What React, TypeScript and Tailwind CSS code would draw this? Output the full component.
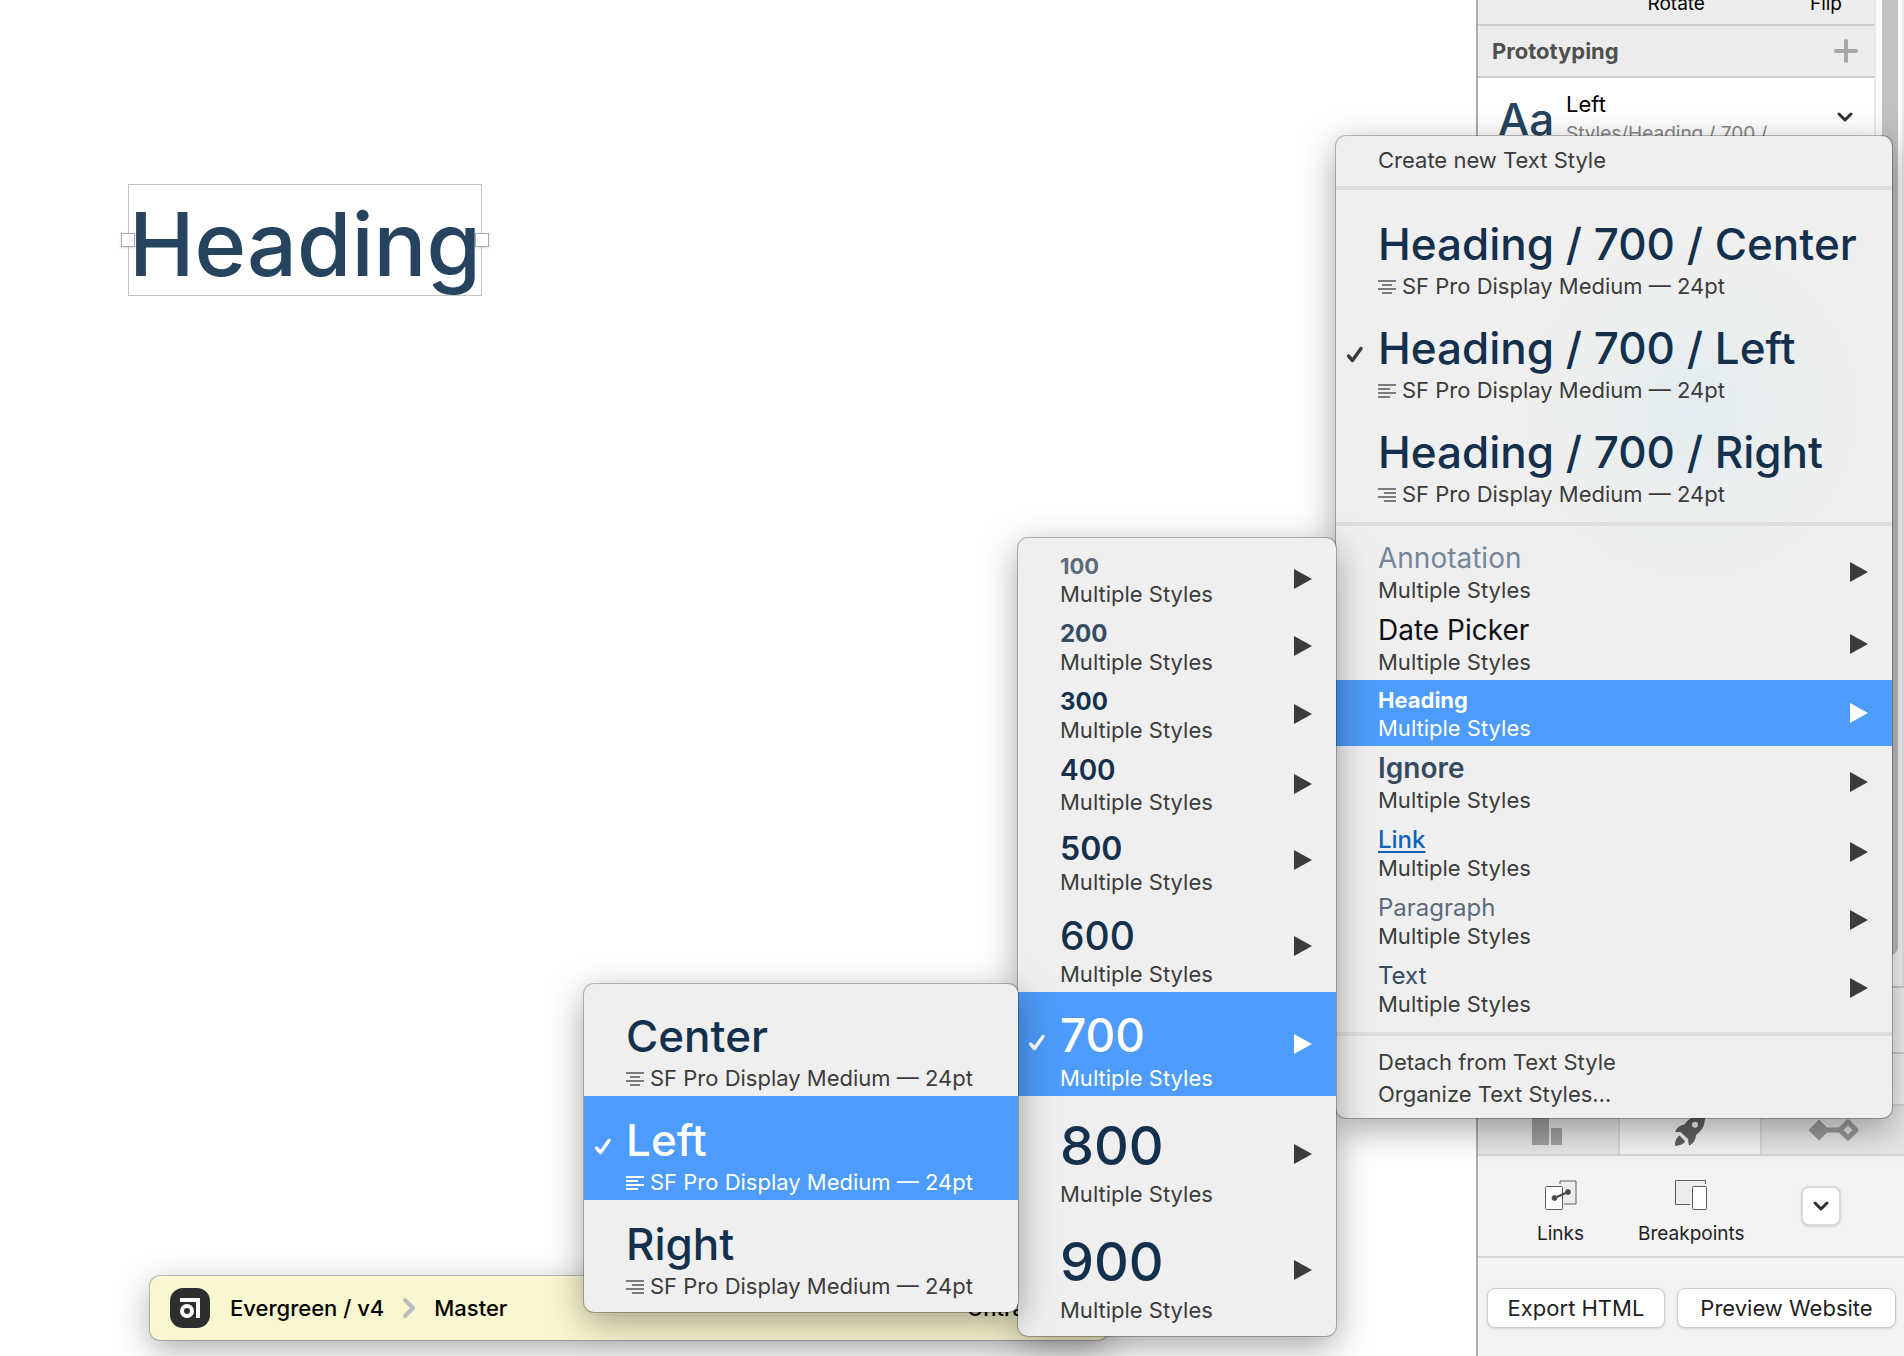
import type { ReactNode } from 'react';

type Align = 'left' | 'center' | 'right';

interface StyleRow {
  label: string;
  title: string;
  align?: Align;
  checked?: boolean;
  active?: boolean;
  submenu?: ReactNode;
}

const TITLE_22 = 'pt-1.5 text-[22px] leading-[28px] font-bold';
const TITLE_24 = 'pt-2 text-[24px] leading-[28px]';
const TITLE_28 = 'pt-1 text-[28px] leading-[36px]';
const TITLE_44 = 'pt-4 text-[44px] leading-[56px] font-medium';

const HEADING_STYLES: StyleRow[] = [
  { label: 'Heading / 700 / Center', title: `${TITLE_44} text-[#14304d]`, align: 'center' },
  { label: 'Heading / 700 / Left', title: `${TITLE_44} text-[#14304d]`, align: 'left', checked: true },
  { label: 'Heading / 700 / Right', title: `${TITLE_44} text-[#14304d]`, align: 'right' }
];

const ALIGNMENTS: StyleRow[] = [
  { label: 'Center', title: `${TITLE_44} text-[#14304d]`, align: 'center' },
  { label: 'Left', title: `${TITLE_44} text-white`, align: 'left', checked: true, active: true },
  { label: 'Right', title: `${TITLE_44} text-[#14304d]`, align: 'right' }
];

const WEIGHTS: StyleRow[] = [
  { label: '100', title: `${TITLE_22} text-[#5a6b7d]` },
  { label: '200', title: `${TITLE_24} font-bold text-[#354b61]` },
  { label: '300', title: `${TITLE_24} font-bold text-[#14304d]` },
  { label: '400', title: `${TITLE_28} font-semibold text-[#14304d]` },
  { label: '500', title: 'pt-2.5 text-[32px] leading-[38px] font-semibold text-[#14304d]' },
  { label: '600', title: 'pt-3 text-[39px] leading-[48px] font-medium text-[#14304d]' },
  {
    label: '700',
    title: 'pt-3.5 text-[46px] leading-[58px] font-medium text-white',
    checked: true,
    active: true,
    submenu: (
      <Menu className="right-full -top-2 w-[434px]" label="Heading 700">
        <Rows rows={ALIGNMENTS} />
      </Menu>
    )
  },
  { label: '800', title: 'pt-4 text-[54px] leading-[68px] font-medium text-[#14304d]' },
  { label: '900', title: 'pt-4 text-[54px] leading-[68px] font-medium text-[#14304d]' }
];

const GROUPS: StyleRow[] = [
  { label: 'Annotation', title: `${TITLE_28} text-[#75869a]` },
  { label: 'Date Picker', title: `${TITLE_28} text-[#0b0f14]` },
  {
    label: 'Heading',
    title: `${TITLE_22} text-white`,
    active: true,
    submenu: (
      <Menu className="right-full -top-[142px] w-[318px]" label="Heading">
        <Rows rows={WEIGHTS} />
      </Menu>
    )
  },
  { label: 'Ignore', title: `${TITLE_28} font-semibold text-[#354b61]` },
  { label: 'Link', title: `${TITLE_24} font-medium text-[#0d63b8] underline decoration-2 underline-offset-3` },
  { label: 'Paragraph', title: `${TITLE_24} text-[#5a6b7d]` },
  { label: 'Text', title: `${TITLE_24} text-[#354b61]` }
];

export default function App() {
  return (
    <div className="relative flex h-screen overflow-hidden bg-white font-['Inter','Liberation_Sans',sans-serif] text-[22px] text-black">
      <Canvas />
      <Inspector />
      <Menu
        className="right-3 top-[136px] w-[556px] bg-[radial-gradient(circle_at_64%_28%,#e2ebef_0,#ecefef_110px,#efefef_190px)]"
        label="Text styles"
      >
        <PlainRow label="Create new Text Style" />
        <Separator />
        <Rows rows={HEADING_STYLES} />
        <Separator />
        <Rows rows={GROUPS} />
        <Separator />
        <PlainRow label="Detach from Text Style" />
        <PlainRow label="Organize Text Styles…" />
      </Menu>
    </div>
  );
}

function Canvas() {
  return (
    <main className="relative min-w-0 flex-1">
      <div className="absolute left-32 top-[184px] border border-[#c6c6c6] pt-2">
        <h1 className="text-[88px] leading-[102px] font-medium text-[#26445f]">Heading</h1>
        <span className="absolute -left-2 top-12 size-3.5 border border-[#a9a9a9] bg-white shadow" />
        <span className="absolute -right-2 top-12 size-3.5 border border-[#a9a9a9] bg-white shadow" />
      </div>

      <div className="absolute bottom-4 left-[150px] flex h-16 w-[958px] items-center rounded-[10px] bg-[#f9f7cf] pl-5 pr-8 font-medium shadow-[0_0_0_1px_rgba(0,0,0,0.22),0_10px_34px_rgba(0,0,0,0.32)]">
        <AbstractMark />
        <a href="#project" className="ml-5">Evergreen / v4</a>
        <svg className="mx-[18px]" width="14" height="22" viewBox="0 0 14 22" fill="none">
          <path d="M3 3 L11 11 L3 19" stroke="#b9bbc0" strokeWidth="4" strokeLinecap="round" strokeLinejoin="round" />
        </svg>
        <a href="#branch">Master</a>
        <span className="ml-auto">Untracked</span>
      </div>
    </main>
  );
}

function Inspector() {
  return (
    <aside className="flex w-[428px] shrink-0 flex-col border-l-2 border-[#ababab] bg-[#f3f3f3]">
      <div className="flex min-h-0 flex-1 bg-[#fafafa]">
        <div className="flex min-w-0 flex-1 flex-col border-r-2 border-[#e8e8e8] bg-white">
          <div className="flex h-6 items-end justify-end gap-[105px] bg-[#ececec] pr-8 pb-2 text-[19px] leading-6">
            <span>Rotate</span>
            <span>Flip</span>
          </div>
          <div className="flex h-[54px] items-center justify-between border-y-2 border-[#cdcdcd] bg-[#ececec] pl-3.5 pr-4">
            <h2 className="font-bold text-[#4f4f4f]">Prototyping</h2>
            <button type="button" aria-label="Add prototype link">
              <svg width="24" height="24" viewBox="0 0 24 24" stroke="#a6a6a6" strokeWidth="4" strokeLinecap="round">
                <path d="M12 2 V22 M2 12 H22" />
              </svg>
            </button>
          </div>
          <div className="flex items-start pl-5 pr-5 pt-3">
            <span className="w-[68px] text-[44px] leading-[58px] font-medium text-[#26445f]">Aa</span>
            <div className="flex-1">
              <p className="leading-7">Left</p>
              <p className="text-[19px] leading-8 text-[#868686]">Styles/Heading / 700 /</p>
            </div>
            <button type="button" aria-label="Choose text style" className="mt-5">
              <Chevron />
            </button>
          </div>
        </div>
        <div className="w-7 border-r-2 border-[#e8e8e8] pl-1.5">
          <div className="h-[955px] w-4 rounded-b-lg bg-[#c1c1c1]" />
        </div>
      </div>

      <div className="h-[66px] border-t-2 border-[#cdcdcd]" />
      <div className="h-[52px] border-t-2 border-[#cdcdcd]" />

      <div className="grid h-[52px] grid-cols-3 border-y-2 border-[#d6d6d6]">
        <button type="button" aria-label="Layout" className="flex justify-center border-r-2 border-[#d6d6d6] bg-[#e5e5e5]">
          <svg width="32" height="40" viewBox="0 0 32 40" fill="#9f9f9f">
            <rect x="0" y="6" width="17" height="33" rx="1" />
            <rect x="19" y="22" width="11" height="17" rx="1" />
          </svg>
        </button>
        <button type="button" aria-label="Launchpad" className="flex justify-center border-r-2 border-[#d6d6d6] pt-2">
          <svg width="32" height="32" viewBox="0 0 32 32" fill="#606062">
            <path
              fillRule="evenodd"
              d="M31 1 C31 10 30 15 22 21 C21.500 25 20.500 28.500 15.500 31.500 C14.500 31.500 14.500 27 14 25 L6.500 18 C5 17.700 1.500 18.300 1 17.500 C3 13.500 6 11 10.500 10.500 C15 3.500 22 1 31 1 Z M21 7.700 A3 3 0 1 0 21 13.700 A3 3 0 1 0 21 7.700 Z"
            />
            <path d="M5.500 21.500 L11 27 C10 30.500 5 31.500 1 31.800 C0.800 28 2 23.500 5.500 21.500 Z" />
          </svg>
        </button>
        <button type="button" aria-label="Interactions" className="flex justify-center bg-[#e5e5e5] pt-3">
          <svg width="52" height="24" viewBox="0 0 52 24">
            <path d="M12 2 L22 12 L12 22 L2 12 Z M20 10 H32 V14 H20 Z" fill="#999" stroke="#999" strokeLinejoin="round" />
            <path d="M41 4 L49 12 L41 20 L33 12 Z" fill="#e5e5e5" stroke="#999" strokeWidth="5" strokeLinejoin="round" />
          </svg>
        </button>
      </div>

      <div className="flex h-[102px] items-start border-b-2 border-[#d3d3d3] pl-[59px] text-[19px] text-[#222]">
        <button type="button" className="flex flex-col items-center gap-3 pt-6">
          <LinksIcon />
          <span className="leading-6">Links</span>
        </button>
        <button type="button" className="ml-[54px] flex flex-col items-center gap-3 pt-6">
          <BreakpointsIcon />
          <span className="leading-6">Breakpoints</span>
        </button>
        <button
          type="button"
          aria-label="More tools"
          className="ml-auto mr-[63px] mt-[30px] flex size-10 items-center justify-center rounded-lg border-2 border-[#d9d9d9] bg-white shadow-sm"
        >
          <Chevron />
        </button>
      </div>

      <div className="flex gap-3 pt-[30px] pb-7 pl-[9px] pr-2 text-[#1f1f1f]">
        <button type="button" className="h-10 w-[178px] rounded-lg border border-[#cbcbcb] bg-white shadow-sm">Export HTML</button>
        <button type="button" className="h-10 flex-1 rounded-lg border border-[#cbcbcb] bg-white shadow-sm">Preview Website</button>
      </div>
    </aside>
  );
}

function Menu({ className, label, children }: { className: string; label: string; children: ReactNode }) {
  return (
    <ul
      role="menu"
      aria-label={label}
      className={`absolute rounded-[10px] bg-[#efefef] py-2 shadow-[0_0_0_1px_rgba(0,0,0,0.25),0_10px_36px_rgba(0,0,0,0.36)] ${className}`}
    >
      {children}
    </ul>
  );
}

function Rows({ rows }: { rows: StyleRow[] }) {
  return rows.map((row) => (
    <li key={row.label} role="none" className={`relative ${row.active ? 'bg-[#4d9bfa] text-white' : 'text-[#3c3c3c]'}`}>
      <button type="button" role="menuitem" className="relative flex w-full items-center pb-1 pl-[42px] pr-6 text-left">
        {row.checked && <Check />}
        <span className="flex-1">
          <span className={`block whitespace-nowrap ${row.title}`}>{row.label}</span>
          <span className="flex items-center gap-1.5 leading-7 whitespace-nowrap">
            {row.align && <AlignIcon align={row.align} active={row.active} />}
            {row.align ? 'SF Pro Display Medium — 24pt' : 'Multiple Styles'}
          </span>
        </span>
        {!row.align && (
          <svg className="mt-1" width="18" height="20" viewBox="0 0 18 20" fill="currentColor">
            <path d="M0 0 L18 10 L0 20 Z" />
          </svg>
        )}
      </button>
      {row.submenu}
    </li>
  ));
}

function PlainRow({ label }: { label: string }) {
  return (
    <li role="none">
      <button type="button" role="menuitem" className="block w-full pl-[42px] text-left leading-8 text-[#3c3c3c]">
        {label}
      </button>
    </li>
  );
}

function Separator() {
  return <li role="separator" className="my-2.5 h-1 bg-[#dedede]" />;
}

function Check() {
  return (
    <svg className="absolute left-2.5 top-[42px]" width="18" height="18" viewBox="0 0 18 18" fill="none">
      <path d="M2.500 10 L6.500 14.500 L15 2.500" stroke="currentColor" strokeWidth="3.4" strokeLinecap="round" strokeLinejoin="round" />
    </svg>
  );
}

function Chevron() {
  return (
    <svg width="18" height="14" viewBox="0 0 18 14" fill="none">
      <path d="M3 4 L9 10 L15 4" stroke="#2f2f2f" strokeWidth="3" strokeLinecap="round" strokeLinejoin="round" />
    </svg>
  );
}

const ALIGN_PATHS: Record<Align, string> = {
  left: 'M0 1 H18 M0 5 H12 M0 9 H18 M0 13 H12',
  center: 'M0 1 H18 M4 5 H14 M0 9 H18 M4 13 H14',
  right: 'M0 1 H18 M6 5 H18 M0 9 H18 M6 13 H18'
};

function AlignIcon({ align, active }: { align: Align; active?: boolean }) {
  return (
    <svg className="mt-0.5" width="18" height="14" viewBox="0 0 18 14" stroke={active ? '#fff' : '#7b7b7b'} strokeWidth="2">
      <path d={ALIGN_PATHS[align]} />
    </svg>
  );
}

/** Rounded square badge with the branch tool's mark. */
function AbstractMark() {
  return (
    <svg width="40" height="40" viewBox="0 0 40 40" fill="none">
      <rect width="40" height="40" rx="13" fill="#2d2e30" />
      <path d="M10 12 H28 V30" stroke="#fff" strokeWidth="4" />
      <circle cx="17" cy="23" r="5" stroke="#fff" strokeWidth="4" />
    </svg>
  );
}

function LinksIcon() {
  return (
    <svg width="32" height="30" viewBox="0 0 32 30" fill="none" stroke="#5c5c5c">
      <path d="M15 4 V1 H31 V24 H19" fill="#ececec" />
      <rect x="0.5" y="6.500" width="17" height="23" rx="1" fill="#fff" />
      <path d="M9.500 18 L23 12" stroke="#444" strokeWidth="2" />
      <circle cx="9.500" cy="18" r="2.500" fill="#444" />
      <circle cx="23" cy="12" r="2.500" fill="#444" />
    </svg>
  );
}

function BreakpointsIcon() {
  return (
    <svg width="32" height="30" viewBox="0 0 32 30" fill="none" stroke="#5c5c5c">
      <path d="M15 24.500 H0.500 V0.500 H30.500 V4" fill="#ececec" />
      <rect x="17.500" y="6.500" width="14" height="23" rx="1" fill="#fff" />
    </svg>
  );
}
